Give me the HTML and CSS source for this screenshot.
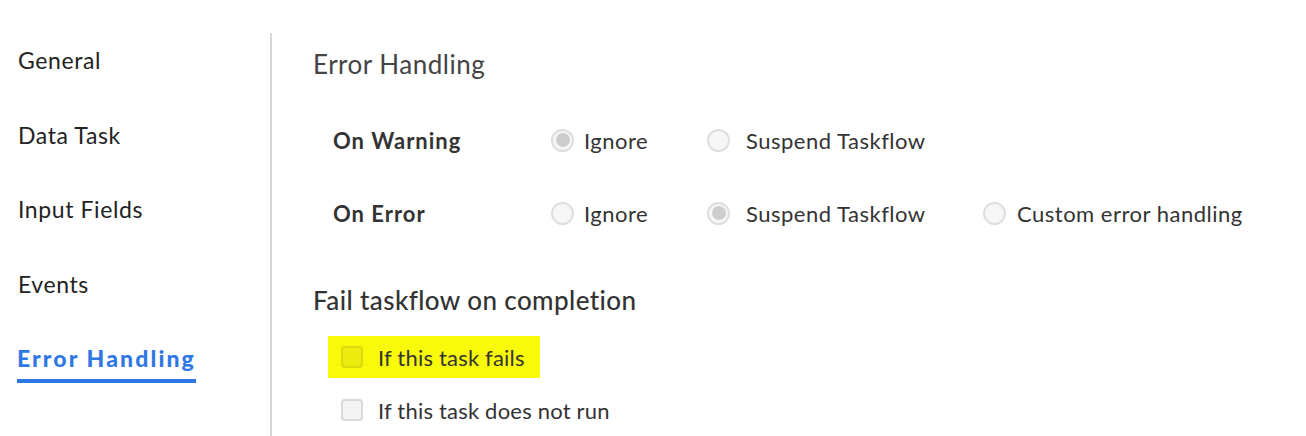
FILE: index.html
```html
<!DOCTYPE html>
<html lang="en">
<head>
    <meta charset="UTF-8">
    <title>Error Handling</title>
    <link rel="stylesheet" href="styles.css">
</head>
<body>
    <div class="page">
        <!-- Left side tabs -->
        <nav class="sidebar">
            <div class="nav-item">General</div>
            <div class="nav-item">Data Task</div>
            <div class="nav-item">Input Fields</div>
            <div class="nav-item">Events</div>
            <div class="nav-item active"><span>Error Handling</span></div>
        </nav>

        <main class="content">
            <h2 class="title">Error Handling</h2>

            <div class="options">
                <div class="opt-row">
                    <div class="opt-label">On Warning</div>
                    <label class="radio col1"><span class="dot checked"></span>Ignore</label>
                    <label class="radio col2"><span class="dot"></span>Suspend Taskflow</label>
                </div>
                <div class="opt-row">
                    <div class="opt-label">On Error</div>
                    <label class="radio col1"><span class="dot"></span>Ignore</label>
                    <label class="radio col2"><span class="dot checked"></span>Suspend Taskflow</label>
                    <label class="radio col3"><span class="dot"></span>Custom error handling</label>
                </div>
            </div>

            <h3 class="subtitle">Fail taskflow on completion</h3>

            <div class="checks">
                <label class="check highlight"><span class="box"></span>If this task fails</label>
                <label class="check"><span class="box"></span>If this task does not run</label>
            </div>
        </main>
    </div>
</body>
</html>
```

FILE: styles.css
```css
body {
    margin: 0;
    font-family: Lato, "Open Sans", sans-serif;
    color: #222;
    background: #fff;
}

.page {
    display: flex;
    height: 436px;
    overflow: hidden;
}

.sidebar {
    width: 272px;
    margin-top: 33px;
    padding-top: 13px;
    border-right: 2px solid #d6d6d6;
    box-sizing: border-box;
    flex-shrink: 0;
}

.nav-item {
    font-size: 23px;
    line-height: 28px;
    letter-spacing: 0.6px;
    padding-left: 18px;
    margin-bottom: 46.5px;
}

.nav-item.active span {
    display: inline-block;
    color: #2f78e4;
    font-weight: 900;
    letter-spacing: 2.1px;
    padding-bottom: 7px;
    border-bottom: 4px solid #2f78e4;
    margin-left: -1px;
}

.content {
    padding-left: 41px;
    padding-top: 49px;
    flex: 1;
}

.title {
    margin: 0;
    font-size: 26px;
    line-height: 30px;
    letter-spacing: 0.5px;
    font-weight: 400;
    color: #444;
}

.options {
    margin-top: 41px;
    padding-left: 20px;
}

.opt-row {
    display: grid;
    grid-template-columns: 218px 156px 276px auto;
    align-items: center;
    height: 40px;
}

.opt-row + .opt-row {
    margin-top: 33px;
}

.opt-label {
    font-size: 22px;
    font-weight: 700;
    letter-spacing: 1px;
    color: #333;
}

.radio {
    display: flex;
    align-items: center;
    gap: 10px;
    font-size: 22px;
    letter-spacing: 0.5px;
    color: #333;
}

.col1 { grid-column: 2; }
.col2 { grid-column: 3; gap: 16px; }
.col3 { grid-column: 4; gap: 11px; }

.dot {
    width: 23px;
    height: 23px;
    border-radius: 50%;
    border: 2px solid #dedede;
    background: #f6f6f6;
    box-sizing: border-box;
    position: relative;
}

.dot.checked::after {
    content: "";
    position: absolute;
    left: 2.5px;
    top: 2.5px;
    width: 14px;
    height: 14px;
    border-radius: 50%;
    background: #cdcdcd;
}

.subtitle {
    margin: 52px 0 0;
    font-size: 26px;
    line-height: 30px;
    letter-spacing: 0.4px;
    font-weight: 500;
    color: #333;
}

.checks {
    margin-top: 21px;
    padding-left: 15px;
}

.check {
    display: flex;
    align-items: center;
    gap: 15px;
    font-size: 22px;
    letter-spacing: 0.2px;
    color: #333;
    height: 24px;
    padding-left: 13px;
    width: fit-content;
}

.check.highlight {
    background: #f9f90a;
    height: 42px;
    padding-right: 15px;
    margin-bottom: 20px;
}

.box {
    width: 22px;
    height: 22px;
    border: 2px solid #dadada;
    border-radius: 4px;
    background: #f4f4f4;
    box-sizing: border-box;
}

.highlight .box {
    background: #ecec0e;
    border-color: #d9d90c;
}
```
